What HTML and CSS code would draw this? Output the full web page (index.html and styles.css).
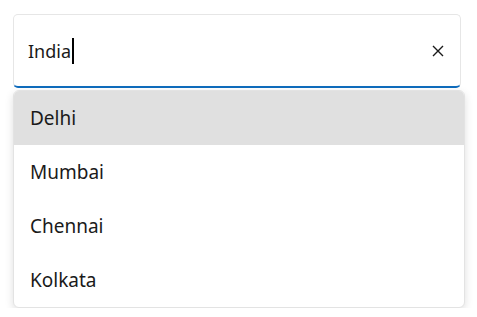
FILE: index.html
```html
<!DOCTYPE html>
<html>
<head>
<meta charset="utf-8">
<link rel="stylesheet" href="styles.css">
</head>
<body>
<div class="suggest">
  <div class="field">
    <span class="value">India</span><span class="caret"></span>
    <button class="clear" aria-label="Clear">
      <svg width="12" height="12" viewBox="0 0 12 12"><path d="M1 1 L11 11 M11 1 L1 11" stroke="#1a1a1a" stroke-width="1.4" fill="none"/></svg>
    </button>
  </div>
  <ul class="list">
    <li class="item active">Delhi</li>
    <li class="item">Mumbai</li>
    <li class="item">Chennai</li>
    <li class="item">Kolkata</li>
  </ul>
</div>
</body>
</html>
```
FILE: styles.css
```css
html, body {
  margin: 0;
  background: #ffffff;
}
body {
  font-family: "Noto Sans", "Open Sans", sans-serif;
  color: #1a1a1a;
}
.suggest {
  padding: 14px 0 0 13px;
  width: 452px;
  position: relative;
}
.field {
  box-sizing: border-box;
  width: 448px;
  height: 74px;
  border: 1px solid #e6e6e6;
  border-bottom: 2px solid #0f6cbd;
  border-radius: 5px;
  display: flex;
  align-items: center;
  padding: 0 0 0 14px;
  background: #fff;
}
.value {
  font-size: 18px;
  line-height: 24px;
}
.caret {
  width: 2px;
  height: 26px;
  background: #000;
  margin-left: 1px;
}
.clear {
  margin-left: auto;
  margin-right: 16px;
  border: 0;
  background: none;
  padding: 0;
  width: 12px;
  height: 12px;
  display: flex;
}
.list {
  list-style: none;
  margin: 2px 0 0 0;
  padding: 0;
  width: 452px;
  box-sizing: border-box;
  border: 1px solid #e3e3e3;
  border-radius: 6px;
  overflow: hidden;
  box-shadow: 0 3px 8px rgba(0,0,0,0.13);
  background: #fff;
}
.item {
  height: 54px;
  line-height: 54px;
  padding-left: 16px;
  font-size: 19px;
}
.item.active {
  background: #e0e0e0;
}
```
